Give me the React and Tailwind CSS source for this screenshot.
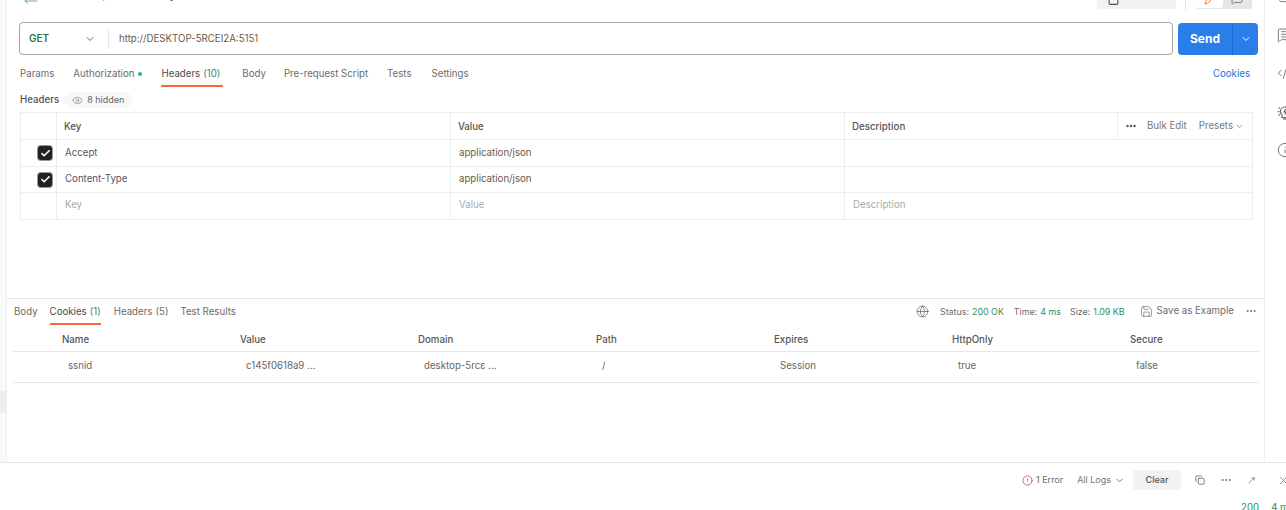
import { Check, ChevronDown, Code2, Copy, Ellipsis, Eye, Globe, Info, MessageSquareText, MoveUpRight, Save, X, CircleAlert, FileText, Archive, Pencil, MessageSquare, MoveLeft } from "lucide-react";

const requestTabs = [
  { label: "Params", className: "ml-[13px]" },
  { label: "Authorization", dot: true, className: "ml-[19px]" },
  { label: "Headers", count: "(10)", active: true, className: "ml-[19px] pr-[3px]" },
  { label: "Body", className: "ml-[19px]" },
  { label: "Pre-request Script", className: "ml-[18px]" },
  { label: "Tests", className: "ml-[19px]" },
  { label: "Settings", className: "ml-[20px]" }
];

const responseTabs = [
  { label: "Body", className: "ml-px" },
  { label: "Cookies", count: "(1)", active: true, className: "ml-[12px]" },
  { label: "Headers", count: "(5)", className: "ml-[13px]" },
  { label: "Test Results", className: "ml-[12px]" }
];

const headerRows = [
  { key: "Accept", value: "application/json", height: "h-[27px]" },
  { key: "Content-Type", value: "application/json", height: "h-[26px]" }
];

const cookieColumns = ["Name", "Value", "Domain", "Path", "Expires", "HttpOnly", "Secure"];
const cookieValues = ["ssnid", "c145f0618a9 ...", "desktop-5rcε ...", "/", "Session", "true", "false"];

function Tab({ tab }) {
  return (
    <div className={`relative flex h-full items-center whitespace-nowrap pt-px ${tab.className || ""} ${tab.active ? "text-[#4a4a4a]" : "text-[#6b6b6b]"}`}>
      {tab.label}
      {tab.count ? <span className="ml-[3px] text-[#4f7a6a]">{tab.count}</span> : null}
      {tab.dot ? <span className="ml-[4px] h-[4px] w-[4px] rounded-full bg-[#26b47f]" /> : null}
      {tab.active ? <span className="absolute -bottom-px left-0 right-0 h-[2px] bg-[#f26b3a]" /> : null}
    </div>
  );
}

function CheckBox() {
  return (
    <div className="flex h-[14px] w-[14px] items-center justify-center rounded-[3px] bg-[#212121] ring-1 ring-[#999]">
      <Check size={11} strokeWidth={3.5} className="text-white" />
    </div>
  );
}

function BulbIcon() {
  return (
    <svg width="16" height="16" viewBox="0 0 16 16" fill="none" stroke="currentColor" strokeWidth="1.2" className="mt-[23px] shrink-0">
      <path d="M5 11c-1-1-1.6-2-1.6-3.4C3.4 5 5.4 3 8 3s4.6 2 4.6 4.6c0 1.4-.6 2.4-1.6 3.4v2.5H5z" />
      <path d="M6 15h4" />
      <path d="M8.5 5L7 8h2l-1 2.5" />
      <path d="M1.6 3.6l1.3 1M0.8 7.6h1.6M1.6 11.4l1.3-1" />
    </svg>
  );
}

function HeaderRow({ row }) {
  return (
    <div className={`grid grid-cols-[36px_394px_394px_1fr] border-b border-[#ededed] ${row.height}`}>
      <div className="flex items-center justify-end border-r border-[#ededed] pr-[4px]">
        <CheckBox />
      </div>
      <div className="flex items-center border-r border-[#ededed] pl-[8px] text-[#55556a]">{row.key}</div>
      <div className="flex items-center border-r border-[#ededed] pl-[8px] text-[#6a5a48]">{row.value}</div>
      <div />
    </div>
  );
}

export default function App() {
  return (
    <div className="flex h-[510px] w-[1286px] flex-col overflow-hidden bg-white font-[Inter,sans-serif] text-[9.7px] text-[#6b6b6b]">
      <div className="flex h-[462px] shrink-0">
        <div className="flex w-[7px] shrink-0 flex-col border-r border-[#ededed] bg-[#f9f9f9] pt-[391px]">
          <div className="h-[22px] bg-[#eeeeee]" />
        </div>

        <main className="flex w-[1257px] shrink-0 flex-col">
          <section className="h-[299px] shrink-0 border-b border-[#e6e6e6]">
            <div className="flex h-[21px] items-start overflow-hidden pl-[17px]">
              <MoveLeft size={14} strokeWidth={1.5} className="mt-[-6px] text-[#5f9ea0]" />
              <span className="ml-[14px] mt-[-16px] text-[13px] text-[#555]">Saved / profile entry</span>
              <div className="ml-auto flex h-[9px] w-[79px] items-start overflow-hidden rounded-b-[3px] bg-[#f2f2f2] pl-[10px]">
                <Archive size={13} className="mt-[-7px] text-[#555]" />
              </div>
              <div className="ml-[9px] h-[10px] w-px bg-[#e6e6e6]" />
              <div className="ml-[10px] mr-[12px] flex h-[9px] w-[56px] items-start overflow-hidden rounded-b-[3px] bg-[#e6e6e6]">
                <div className="flex h-[8px] w-[27px] justify-center overflow-hidden rounded-b-[3px] bg-white">
                  <Pencil size={12} className="mt-[-7px] text-[#f26b3a]" />
                </div>
                <MessageSquare size={12} className="ml-[8px] mt-[-7px] text-[#888]" />
              </div>
            </div>

            <div className="ml-[12px] mt-px flex h-[33px] items-stretch gap-[5px]">
              <div className="flex w-[1154px] items-center rounded-[4px] border border-[#a6a6a6]">
                <span className="ml-[9px] w-[55px] text-[10px] font-semibold text-[#1f7a4d]">GET</span>
                <ChevronDown size={12} className="text-[#6b6b6b]" />
                <div className="ml-[12px] h-[20px] w-px bg-[#e6e6e6]" />
                <span className="ml-[10px] pt-[2px] text-[#6a5a48]">http://DESKTOP-5RCEI2A:5151</span>
              </div>
              <div className="flex h-[32px] w-[80px] self-end overflow-hidden rounded-[4px] bg-[#2b7de9] text-white">
                <div className="flex w-[54px] items-center justify-center text-[12px] font-bold">Send</div>
                <div className="flex flex-1 items-center justify-center border-l border-[#1f6cd0]">
                  <ChevronDown size={12} />
                </div>
              </div>
            </div>

            <div className="mt-[6px] flex h-[25px] items-center pr-[14px]">
              {requestTabs.map((tab) => (
                <Tab key={tab.label} tab={tab} />
              ))}
              <span className="ml-auto pt-px text-[#2b6fd6]">Cookies</span>
            </div>

            <div className="ml-[13px] mt-[4px] flex h-[20px] items-center">
              <span className="font-medium text-[#555]">Headers</span>
              <div className="ml-[5px] flex h-[16px] items-center whitespace-nowrap rounded-full bg-[#f7f7f7] pl-[8px] pr-[8px] text-[9px] text-[#666]">
                <Eye size={11} className="mr-[4px] text-[#999]" />
                8 hidden
              </div>
            </div>

            <div className="ml-[13px] mt-[2px] w-[1233px] border border-b-0 border-[#ededed]">
              <div className="grid h-[27px] grid-cols-[36px_394px_394px_273px_1fr] border-b border-[#ededed] font-medium text-[#555]">
                <div className="border-r border-[#ededed]" />
                <div className="flex items-center border-r border-[#ededed] pl-[7px] pt-[2px]">Key</div>
                <div className="flex items-center border-r border-[#ededed] pl-[7px] pt-[2px]">Value</div>
                <div className="flex items-center border-r border-[#ededed] pl-[7px] pt-[2px]">Description</div>
                <div className="flex items-center whitespace-nowrap pl-[7px] font-normal text-[#777]">
                  <Ellipsis size={12} strokeWidth={3} className="shrink-0 text-[#555]" />
                  <span className="ml-[10px]">Bulk Edit</span>
                  <span className="ml-[12px]">Presets</span>
                  <ChevronDown size={9} className="ml-[2px] shrink-0" />
                </div>
              </div>
              {headerRows.map((row) => (
                <HeaderRow key={row.key} row={row} />
              ))}
              <div className="grid h-[27px] grid-cols-[36px_394px_394px_1fr] border-b border-[#ededed] text-[#aaaaaa]">
                <div className="border-r border-[#ededed]" />
                <div className="flex items-center border-r border-[#ededed] pb-[2px] pl-[8px]">Key</div>
                <div className="flex items-center border-r border-[#ededed] pb-[2px] pl-[8px]">Value</div>
                <div className="flex items-center pb-[2px] pl-[8px]">Description</div>
              </div>
            </div>
          </section>

          <section className="flex-1 pl-[6px] pr-[5px]">
            <div className="flex h-[25px] items-center">
              {responseTabs.map((tab) => (
                <Tab key={tab.label} tab={tab} />
              ))}
              <div className="ml-auto flex items-center whitespace-nowrap text-[8.9px]">
                <Globe size={13} strokeWidth={1.2} className="text-[#555]" />
                <span className="ml-[11px]">Status:</span>
                <span className="ml-[3px] text-[#2f8f5f]">200 OK</span>
                <span className="ml-[10px]">Time:</span>
                <span className="ml-[3px] text-[#2f8f5f]">4 ms</span>
                <span className="ml-[9px]">Size:</span>
                <span className="ml-[3px] text-[#2f8f5f]">1.09 KB</span>
                <Save size={13} strokeWidth={1.2} className="ml-[15px] text-[#666]" />
                <span className="ml-[4px] text-[9.7px]">Save as Example</span>
                <Ellipsis size={12} strokeWidth={2} className="ml-[11px] mr-[2px] text-[#666]" />
              </div>
            </div>
            <div className="grid h-[28px] grid-cols-[repeat(7,178px)] border-b border-[#e9e9e9] pl-[49px] pt-[6px] font-medium text-[#555]">
              {cookieColumns.map((name) => (
                <div key={name} className="flex items-center">{name}</div>
              ))}
            </div>
            <div className="grid h-[31px] grid-cols-[repeat(7,178px)] border-b border-[#e9e9e9] pb-[2px] pl-[55px] text-[#666]">
              {cookieValues.map((value, index) => (
                <div key={index} className="flex items-center">{value}</div>
              ))}
            </div>
          </section>
        </main>

        <aside className="flex w-[22px] shrink-0 flex-col overflow-hidden border-l border-[#ededed] pl-[12px] text-[#666]">
          <FileText size={16} strokeWidth={1.3} className="mt-[-13px] shrink-0" />
          <MessageSquareText size={16} strokeWidth={1.3} className="mt-[24px] shrink-0" />
          <Code2 size={16} strokeWidth={1.3} className="mt-[22px] shrink-0" />
          <BulbIcon />
          <Info size={16} strokeWidth={1.3} className="mt-[22px] shrink-0" />
        </aside>
      </div>

      <footer className="flex-1 overflow-hidden border-t border-[#e6e6e6]">
        <div className="mt-[7px] flex h-[20px] items-center whitespace-nowrap pl-[1022px] text-[9px]">
          <CircleAlert size={11} strokeWidth={1.6} className="shrink-0 text-[#d93025]" />
          <span className="ml-[3px]">1 Error</span>
          <span className="ml-[14px] text-[#777]">All Logs</span>
          <ChevronDown size={11} className="ml-[3px] shrink-0" />
          <div className="ml-[8px] flex h-[20px] w-[48px] shrink-0 items-center justify-center rounded-[3px] bg-[#f2f2f2] font-medium text-[#555]">Clear</div>
          <Copy size={10} className="ml-[14px] shrink-0" />
          <Ellipsis size={12} className="ml-[15px] shrink-0" />
          <MoveUpRight size={9} className="ml-[15px] shrink-0" />
          <X size={13} strokeWidth={1.3} className="ml-[21px] shrink-0" />
        </div>
        <div className="mt-[11px] flex items-center whitespace-nowrap pl-[1241px] text-[#2f8f4f]">
          <span>200</span>
          <span className="ml-[6px] h-[12px] w-px bg-[#e0e0e0]" />
          <span className="ml-[6px]">4 ms</span>
        </div>
      </footer>
    </div>
  );
}
